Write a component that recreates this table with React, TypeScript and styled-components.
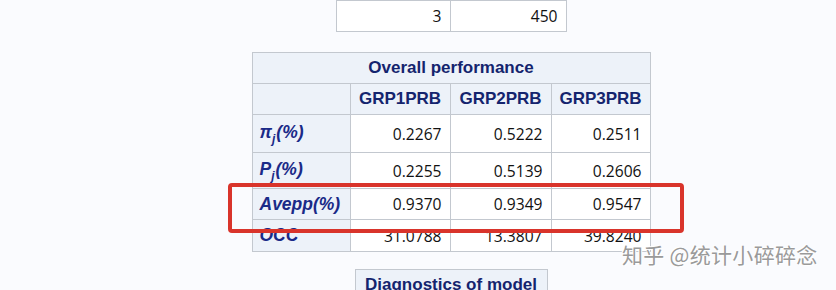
import React from 'react';
import styled, { createGlobalStyle } from 'styled-components';

const Global = createGlobalStyle`
  html, body {
    margin: 0;
    padding: 0;
    background: #fafbfe;
    overflow: hidden;
  }
  body {
    font-family: "Open Sans", "Liberation Sans", sans-serif;
  }
`;

const Page = styled.div`
  position: relative;
  width: 902px;
  height: 290px;
  display: flex;
  flex-direction: column;
  align-items: center;
`;

const Table = styled.table<{ $mt: number }>`
  border-collapse: collapse;
  margin-top: ${(p) => p.$mt}px;
  background: #fff;
  border: 1px solid #c3c8cf;
`;

const Cell = styled.td<{ $w?: number; $h?: number }>`
  border: 1px solid #c3c8cf;
  width: ${(p) => (p.$w ? `${p.$w}px` : 'auto')};
  height: ${(p) => (p.$h ? `${p.$h}px` : '29px')};
  padding: 0 8px 0 6px;
  box-sizing: border-box;
  text-align: right;
  font-size: 15.6px;
  color: #111;
  vertical-align: middle;
`;

const Head = styled.th<{ $w?: number; $h?: number }>`
  border: 1px solid #c3c8cf;
  background: #edf2f9;
  width: ${(p) => (p.$w ? `${p.$w}px` : 'auto')};
  height: ${(p) => (p.$h ? `${p.$h}px` : '31px')};
  padding: 0 4px;
  box-sizing: border-box;
  text-align: center;
  font-family: "Liberation Sans", Arial, sans-serif;
  font-size: 17px;
  font-weight: 700;
  color: #14246e;
  vertical-align: middle;
  white-space: nowrap;
`;

const RowHead = styled.th<{ $h?: number }>`
  border: 1px solid #c3c8cf;
  background: #edf2f9;
  height: ${(p) => (p.$h ? `${p.$h}px` : '31px')};
  padding: 0 4px 0 7px;
  box-sizing: border-box;
  text-align: left;
  font-family: "Liberation Sans", Arial, sans-serif;
  font-size: 17.5px;
  font-weight: 700;
  font-style: italic;
  color: #1a2a88;
  vertical-align: middle;
  white-space: nowrap;
`;

const Sub = styled.sub`
  font-size: 12px;
  vertical-align: -5px;
  margin: 0 1px 0 0;
`;

// red marker drawn over the table
const Highlight = styled.div`
  position: absolute;
  left: 228px;
  top: 183px;
  width: 456px;
  height: 50px;
  box-sizing: border-box;
  border: 4px solid #d9342b;
  border-radius: 4px;
`;

const Watermark = styled.div`
  position: absolute;
  left: 622px;
  top: 239px;
  font-family: "Noto Sans CJK SC", sans-serif;
  font-size: 21px;
  color: #9a9a9a;
  letter-spacing: 0.3px;
  text-shadow: 0 0 1px #fff, 1px 1px 0 #fff, -1px -1px 0 #fff;
  white-space: nowrap;
`;

const rows: { label: React.ReactNode; h: number; v: string[] }[] = [
  { label: <>π<Sub>j</Sub>(%)</>, h: 38, v: ['0.2267', '0.5222', '0.2511'] },
  { label: <>P<Sub>j</Sub>(%)</>, h: 36, v: ['0.2255', '0.5139', '0.2606'] },
  { label: 'Avepp(%)', h: 31, v: ['0.9370', '0.9349', '0.9547'] },
  { label: 'OCC', h: 32, v: ['31.0788', '13.3807', '39.8240'] },
];

export default function App() {
  return (
    <>
      <Global />
      <Page>
        <Table $mt={0}>
          <tbody>
            <tr>
              <Cell $w={114} $h={31}>3</Cell>
              <Cell $w={116} $h={31}>450</Cell>
            </tr>
          </tbody>
        </Table>

        <Table $mt={20}>
          <thead>
            <tr>
              <Head colSpan={4}>Overall performance</Head>
            </tr>
            <tr>
              <Head $w={98} />
              <Head $w={100}>GRP1PRB</Head>
              <Head $w={101}>GRP2PRB</Head>
              <Head $w={99}>GRP3PRB</Head>
            </tr>
          </thead>
          <tbody>
            {rows.map((r, i) => (
              <tr key={i}>
                <RowHead $h={r.h}>{r.label}</RowHead>
                {r.v.map((x) => (
                  <Cell key={x} $h={r.h}>{x}</Cell>
                ))}
              </tr>
            ))}
          </tbody>
        </Table>

        <Table $mt={17}>
          <thead>
            <tr>
              <Head $w={192}>Diagnostics of model</Head>
            </tr>
          </thead>
        </Table>

        <Highlight />
        <Watermark>知乎 @统计小碎碎念</Watermark>
      </Page>
    </>
  );
}
